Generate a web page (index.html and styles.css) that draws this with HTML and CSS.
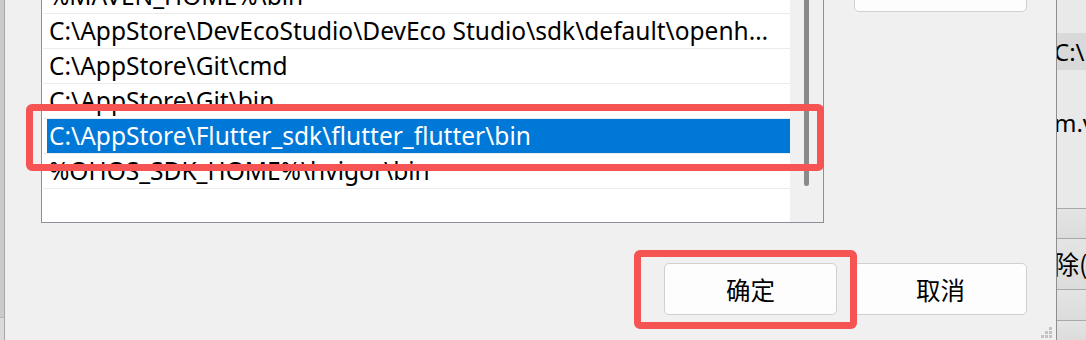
FILE: index.html
```html
<!DOCTYPE html>
<html lang="zh-CN">
<head>
<meta charset="utf-8">
<title>编辑环境变量</title>
<link rel="stylesheet" href="styles.css">
</head>
<body>
<div class="screen">
  <div class="bg-left"><div class="bg-left-top"></div><div class="bg-left-bottom"></div></div>
  <div class="dialog">
    <div class="top">
      <div class="listbox">
        <div class="list">
          <div class="row"><span class="txt">%MAVEN_HOME%\bin</span></div>
          <div class="row"><span class="txt">C:\AppStore\DevEcoStudio\DevEco Studio\sdk\default\openharmony\toolchains</span></div>
          <div class="row"><span class="txt">C:\AppStore\Git\cmd</span></div>
          <div class="row"><span class="txt">C:\AppStore\Git\bin</span></div>
          <div class="row sel"><span class="txt">C:\AppStore\Flutter_sdk\flutter_flutter\bin</span></div>
          <div class="row"><span class="txt">%OHOS_SDK_HOME%\hvigor\bin</span></div>
        </div>
        <div class="vscroll"><div class="thumb"></div></div>
      </div>
      <div class="side"><button class="btn btn-top">编辑文本(T)...</button></div>
    </div>
    <div class="actions">
      <button class="btn">确定</button>
      <button class="btn">取消</button>
    </div>
  </div>
  <div class="bg-right">
    <div class="r-gap"></div>
    <div class="r-row"><span>C:\...</span></div>
    <div class="r-block"><span>m.v</span></div>
    <div class="r-band r-b1"></div>
    <div class="r-band r-b2"><span>除(D)</span></div>
    <div class="r-band r-b3"></div>
    <div class="r-band r-b4"></div>
  </div>
  <svg class="grip" width="14" height="14" viewBox="0 0 14 14">
    <rect x="10" y="2" width="3" height="3" fill="#c3c3c3"/>
    <rect x="6" y="6" width="3" height="3" fill="#c3c3c3"/>
    <rect x="10" y="6" width="3" height="3" fill="#c3c3c3"/>
    <rect x="2" y="10" width="3" height="3" fill="#c3c3c3"/>
    <rect x="6" y="10" width="3" height="3" fill="#c3c3c3"/>
    <rect x="10" y="10" width="3" height="3" fill="#c3c3c3"/>
  </svg>
  <div class="mark mark-list"></div>
  <div class="mark mark-ok"></div>
</div>
</body>
</html>
```

FILE: styles.css
```css
* { box-sizing: border-box; }
html, body { margin: 0; padding: 0; background: #f0f0f0; }
body { font-family: "Noto Sans", "Noto Sans CJK SC", sans-serif; }

.screen {
  position: relative;
  width: 1086px;
  height: 340px;
  overflow: hidden;
  display: flex;
}

.bg-left {
  width: 5px;
  flex: none;
  display: flex;
  flex-direction: column;
  border-right: 1px solid #a6a6a6;
}
.bg-left-top { height: 318px; background: #cbcbcb; border-bottom: 1px solid #b5b5b5; }
.bg-left-bottom { flex: 1; background: #dadada; }

.dialog {
  width: 1052px;
  flex: none;
  background: #f0f0f0;
  border-right: 1px solid #8f8f8f;
  padding: 0 29px 0 36px;
  display: flex;
  flex-direction: column;
  border-bottom-left-radius: 8px;
}

.top {
  display: flex;
  align-items: flex-start;
  gap: 30px;
}

.listbox {
  width: 783px;
  flex: none;
  height: 245px;
  margin-top: -22px;
  border: 1px solid #8b9098;
  background: #ffffff;
  display: flex;
}

.list {
  flex: 1;
  min-width: 0;
  overflow: hidden;
  padding-left: 1px;
  display: flex;
  flex-direction: column;
}

.row {
  height: 35px;
  flex: none;
  border-bottom: 1px solid #ebebeb;
  display: flex;
  font-size: 24.5px;
  line-height: 34px;
  color: #000;
}
.row .txt {
  flex: 1;
  min-width: 0;
  padding: 0 14px 0 6px;
  white-space: nowrap;
  overflow: hidden;
  text-overflow: ellipsis;
}
.row.sel .txt {
  margin-left: 4px;
  padding-left: 2px;
  background: #0078d7;
  color: #ffffff;
}

.vscroll {
  width: 33px;
  flex: none;
  background: #f0f0f0;
  padding-left: 14px;
}
.thumb {
  width: 5px;
  height: 207px;
  background: #8a8a8a;
  border-radius: 3px;
}

.side {
  width: 173px;
  flex: none;
  margin-top: -40px;
  display: flex;
}

.btn {
  width: 173px;
  height: 52px;
  flex: none;
  background: #fdfdfd;
  border: 1px solid #d0d0d0;
  border-radius: 5px;
  font-family: "Noto Sans CJK SC", "Noto Sans", sans-serif;
  font-size: 24.5px;
  color: #000;
  padding: 0;
}
.btn-top {
  padding-bottom: 18px;
  line-height: 30px;
}

.actions {
  display: flex;
  justify-content: flex-end;
  gap: 17px;
  margin-top: 40px;
}

.bg-right {
  flex: 1;
  min-width: 0;
  overflow: hidden;
  background: #e9e9e9;
  display: flex;
  flex-direction: column;
  font-size: 24px;
  color: #000;
  white-space: nowrap;
}
.bg-right span { margin-left: -3px; }
.r-gap { height: 33px; flex: none; }
.r-row { height: 37px; flex: none; background: #d9d9d9; line-height: 37px; }
.r-block { height: 138px; flex: none; padding-top: 38px; line-height: 30px; }
.r-band { flex: none; border-top: 1px solid #a9a9a9; background: linear-gradient(#e4e4e4, #dcdcdc); }
.r-b1 { height: 30px; }
.r-b2 { height: 51px; font-family: "Noto Sans CJK SC", sans-serif; font-size: 25px; line-height: 48px; }
.r-b3 { height: 31px; }
.r-b4 { flex: 1; }

.grip {
  position: absolute;
  left: 1039px;
  top: 325px;
}

.mark {
  position: absolute;
  border: 7px solid #f65353;
  border-radius: 6px;
}
.mark-list { left: 26px; top: 104px; width: 798px; height: 67px; }
.mark-ok { left: 634px; top: 250px; width: 223px; height: 79px; }
```
